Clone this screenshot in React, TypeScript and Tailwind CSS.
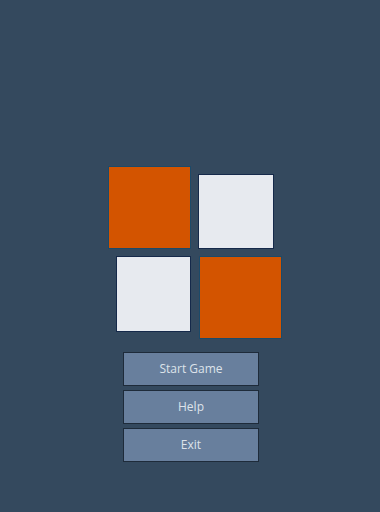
import React from "react";

export default function App() {
  const btn =
    "w-[136px] h-[34px] bg-[#687f9d] border border-[#1e2b3a] text-[#dde3ea] text-[12px] flex items-center justify-center";
  return (
    <div
      className="w-[380px] h-[512px] bg-[#34495e] flex flex-col items-center pt-[166px]"
      style={{ fontFamily: '"Open Sans", "Noto Sans", sans-serif' }}
    >
      <div className="ml-[10px] grid grid-cols-[83px_83px] grid-rows-[83px_83px] gap-x-[8px] gap-y-[7px]">
        <div className="w-[83px] h-[83px] bg-[#d35400] border border-[#1b4a6a]" />
        <div className="flex items-end justify-start">
          <div className="w-[76px] h-[75px] bg-[#e7eaef] border border-[#15294a] -ml-[1px]" />
        </div>
        <div className="flex items-start justify-end">
          <div className="w-[75px] h-[76px] bg-[#e7eaef] border border-[#15294a]" />
        </div>
        <div className="w-[83px] h-[83px] bg-[#d35400] border border-[#1b4a6a]" />
      </div>
      <div className="mt-[13px] ml-[2px] flex flex-col gap-[4px]">
        <div className={btn}>Start Game</div>
        <div className={btn}>Help</div>
        <div className={btn}>Exit</div>
      </div>
    </div>
  );
}
